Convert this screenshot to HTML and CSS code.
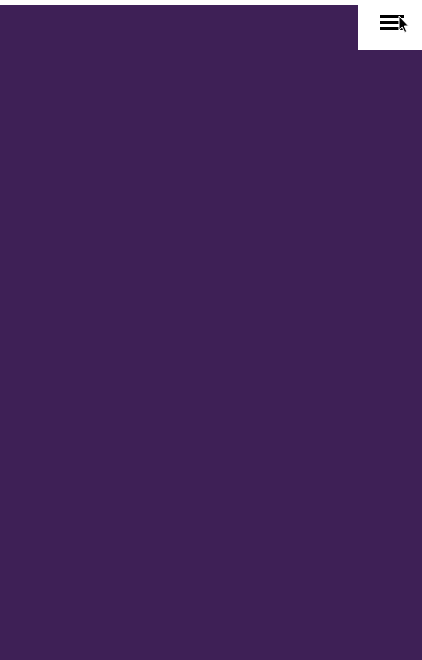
FILE: index.html
```html
<!DOCTYPE html>
<html>
<head>
<meta charset="utf-8">
<link rel="stylesheet" href="styles.css">
</head>
<body>
<div class="page">
  <div class="topbar"></div>
  <main class="main"></main>
  <button class="menu-btn" aria-label="Menu">
    <svg width="26" height="16" viewBox="0 0 26 16">
      <rect x="0" y="0" width="24" height="3" fill="#000"/>
      <rect x="0" y="6" width="24" height="3" fill="#000"/>
      <rect x="0" y="12" width="24" height="3" fill="#000"/>
    </svg>
    <svg class="cursor" width="12" height="19" viewBox="0 0 12 19">
      <path d="M1 1 L1 15 L4.2 12 L6.7 17.5 L8.7 16.5 L6.3 11 L10.5 11 Z" fill="#000" stroke="#fff" stroke-width="1"/>
    </svg>
  </button>
</div>
</body>
</html>
```
FILE: styles.css
```css
html, body {
  margin: 0;
  padding: 0;
  height: 100%;
}
body {
  background: #3e2056;
  font-family: "Liberation Sans", Arial, sans-serif;
}
.page {
  position: relative;
  display: flex;
  flex-direction: column;
  height: 660px;
  overflow: hidden;
}
.topbar {
  height: 5px;
  background: #fefefc;
  flex: none;
}
.main {
  flex: 1;
  background: #3e2056;
}
.menu-btn {
  position: absolute;
  top: 0;
  right: 0;
  width: 64px;
  height: 50px;
  background: #fff;
  border: none;
  padding: 0;
  margin: 0;
  display: flex;
  align-items: flex-start;
  justify-content: flex-start;
  padding-left: 22px;
  padding-top: 15px;
  box-sizing: border-box;
}
.cursor {
  position: absolute;
  left: 40px;
  top: 15px;
}
```
